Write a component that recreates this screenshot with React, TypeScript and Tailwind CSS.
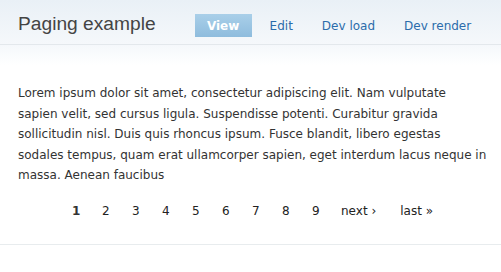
const pages = ["2", "3", "4", "5", "6", "7", "8", "9"];

const lines = [
  "Lorem ipsum dolor sit amet, consectetur adipiscing elit. Nam vulputate",
  "sapien velit, sed cursus ligula. Suspendisse potenti. Curabitur gravida",
  "sollicitudin nisl. Duis quis rhoncus ipsum. Fusce blandit, libero egestas",
  "sodales tempus, quam erat ullamcorper sapien, eget interdum lacus neque in",
  "massa. Aenean faucibus",
];

export default function App() {
  return (
    <div className="w-[501px] h-[272px] bg-white overflow-hidden font-['DejaVu_Sans',Verdana,sans-serif]">
      <div className="h-[45px] border-b border-[#e3e8ec] bg-gradient-to-b from-[#e9f0f6] to-[#f5f8fb] flex items-start pl-[18px]">
        <h1 className="mt-[11px] text-[19.2px] leading-[26px] text-[#444] font-['Liberation_Sans',Arial,sans-serif]">
          Paging example
        </h1>
        <div className="ml-[39px] mt-[14px] flex items-center text-[12px] text-[#2b6cab]">
          <span className="w-[57px] h-[23px] flex items-center justify-center bg-gradient-to-b from-[#a9cfe9] to-[#8ebcdd] text-white font-bold">
            View
          </span>
          <span className="ml-[18px]">Edit</span>
          <span className="ml-[29px]">Dev load</span>
          <span className="ml-[29px]">Dev render</span>
        </div>
      </div>
      <div className="h-[20px] bg-gradient-to-b from-[#f5f8fb] to-white" />
      <div className="pl-[18px] pt-[18px] text-[12px] leading-[20.5px] text-[#333]">
        {lines.map((l) => (
          <p key={l} className="whitespace-nowrap">{l}</p>
        ))}
      </div>
      <div className="mt-[16px] flex items-center text-[12px] text-[#222] pl-[72px]">
        <span className="w-[10px] font-bold text-[#333]">1</span>
        {pages.map((p) => (
          <span key={p} className="ml-[20px] w-[10px]">{p}</span>
        ))}
        <span className="ml-[19px]">next ›</span>
        <span className="ml-[24px]">last »</span>
      </div>
      <div className="mt-[24px] border-t border-[#e8ecee]" />
    </div>
  );
}
